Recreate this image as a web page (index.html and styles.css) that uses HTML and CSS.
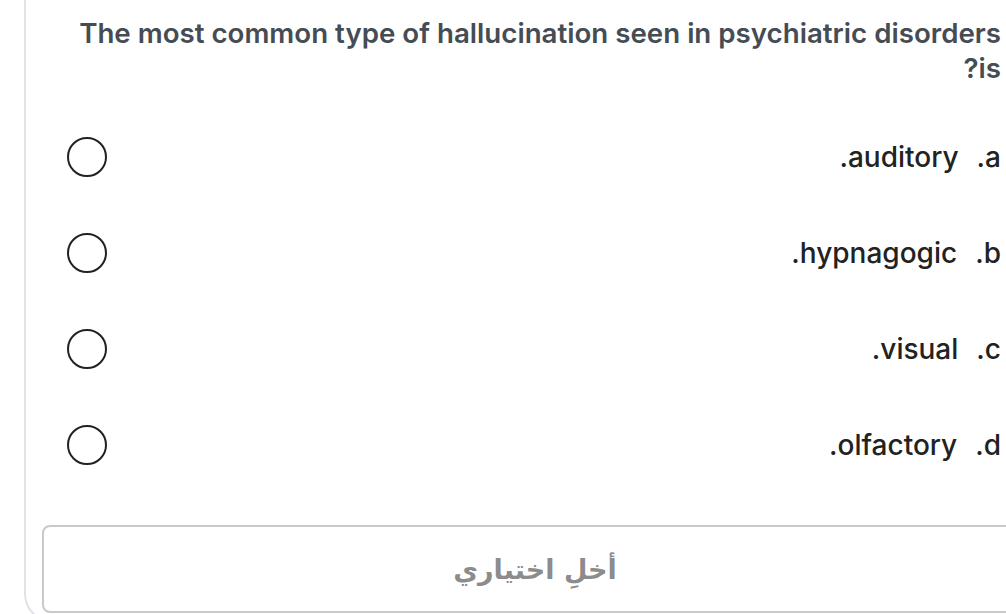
FILE: index.html
```html
<!DOCTYPE HTML>
<html>
	<head>
		<meta charset="utf-8">
		<title>Quiz question</title>
		<link rel="stylesheet" href="styles.css">
	</head>
	<body>

		<div class="question-card" dir="rtl">

			<div class="question-text">The most common type of hallucination seen in psychiatric disorders is?</div>

			<div class="answer-list">
				<label class="answer-row">
					<span class="answer-label">
						<span class="answer-number">a.</span>
						<span class="answer-text">auditory.</span>
					</span>
					<span class="answer-radio"></span>
				</label>
				<label class="answer-row">
					<span class="answer-label">
						<span class="answer-number">b.</span>
						<span class="answer-text">hypnagogic.</span>
					</span>
					<span class="answer-radio"></span>
				</label>
				<label class="answer-row">
					<span class="answer-label">
						<span class="answer-number">c.</span>
						<span class="answer-text">visual.</span>
					</span>
					<span class="answer-radio"></span>
				</label>
				<label class="answer-row">
					<span class="answer-label">
						<span class="answer-number">d.</span>
						<span class="answer-text">olfactory.</span>
					</span>
					<span class="answer-radio"></span>
				</label>
			</div>

			<button class="clear-button" type="button">أخلِ اختياري</button>

		</div>

	</body>
</html>
```

FILE: styles.css
```css
* {
	box-sizing:				border-box;
}

html,
body {
	background:				#ffffff;
	font-family:			Inter, "Liberation Sans", "DejaVu Sans", sans-serif;
	height:					100%;
	overflow:				hidden;
}

body {
	margin:					0;
	padding:				0;
}

.question-card {
	border:					2px solid #dfe3e8;
	border-top:				none;
	border-radius:			0 0 28px 28px;
	margin-left:			24px;
	padding:				16px 41px 0 41px;
	width:					1020px;
	height:					622px;
}

.question-text {
	color:					#464c53;
	font-size:				27.7px;
	font-weight:			600;
	line-height:			35px;
}

.answer-list {
	margin-top:				23px;
}

.answer-row {
	align-items:			center;
	display:				flex;
	height:					96px;
	justify-content:		space-between;
}

.answer-label {
	color:					#222222;
	display:				flex;
	font-size:				28px;
	font-weight:			500;
	gap:					18px;
}

.answer-radio {
	border:					2.5px solid #222222;
	border-radius:			50%;
	height:					40px;
	width:					40px;
}

.clear-button {
	background:				#ffffff;
	border:					2px solid #c8c9cc;
	border-radius:			8px;
	color:					#8c8c8c;
	display:				block;
	font-family:			"DejaVu Sans", sans-serif;
	font-size:				27px;
	font-weight:			bold;
	height:					88px;
	margin:					32px -27px 0 -25px;
	width:					calc(100% + 52px);
}
```
